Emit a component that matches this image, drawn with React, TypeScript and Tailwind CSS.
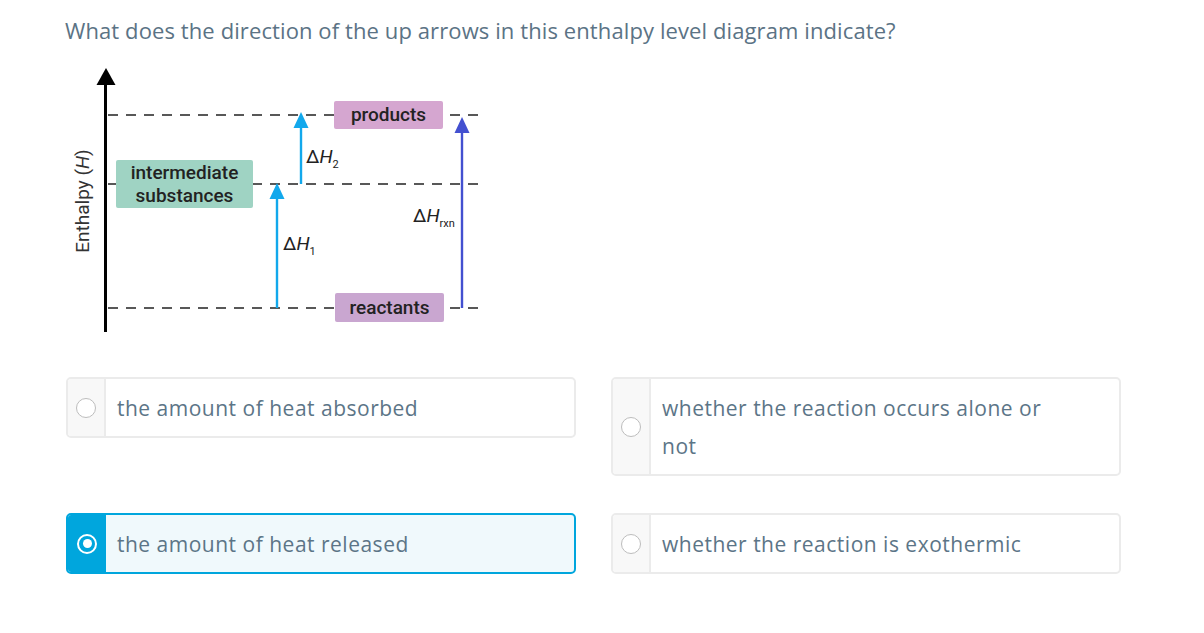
import React from "react";

function Delta({ x, y, sub }: { x: number; y: number; sub: string }) {
  return (
    <text x={x} y={y} fontFamily="Roboto, sans-serif" fontSize="19" fill="#222">
      Δ<tspan fontStyle="italic">H</tspan>
      <tspan fontSize="11" dy="5">
        {sub}
      </tspan>
    </text>
  );
}

function Diagram() {
  return (
    <svg width="430" height="290" viewBox="60 60 430 290" className="block">
      {/* level lines */}
      <g stroke="#222" strokeWidth="1.4" strokeDasharray="10 8">
        <line x1="108" y1="115" x2="478" y2="115" />
        <line x1="108" y1="184" x2="478" y2="184" />
        <line x1="108" y1="308" x2="478" y2="308" />
      </g>

      {/* enthalpy axis */}
      <line x1="105.5" y1="82" x2="105.5" y2="332" stroke="#000" strokeWidth="3" />
      <polygon points="96.5,85 115.5,85 106,68" fill="#000" />
      <text
        transform="translate(89 201) rotate(-90)"
        textAnchor="middle"
        fontFamily="Roboto, sans-serif"
        fontSize="19"
        fill="#333"
      >
        Enthalpy (<tspan fontStyle="italic">H</tspan>)
      </text>

      {/* boxes */}
      <g fontFamily="Roboto, sans-serif" fontSize="19" fontWeight="500" fill="#222" textAnchor="middle">
        <rect x="116" y="160" width="137" height="48" rx="2" fill="#9fd3c3" />
        <text x="184.5" y="179">intermediate</text>
        <text x="184.5" y="202">substances</text>
        <rect x="334" y="101" width="109" height="28" rx="2" fill="#d5a6d0" />
        <text x="388.5" y="121">products</text>
        <rect x="335" y="293" width="109" height="29" rx="2" fill="#c9a6d0" />
        <text x="389.5" y="314">reactants</text>
      </g>

      {/* ΔH1 */}
      <line x1="277" y1="308" x2="277" y2="196" stroke="#12a8ec" strokeWidth="2.4" />
      <polygon points="269.5,199 284.5,199 277,183" fill="#12a8ec" />
      {/* ΔH2 */}
      <line x1="301" y1="184" x2="301" y2="125" stroke="#12a8ec" strokeWidth="2.4" />
      <polygon points="293.5,128 308.5,128 301,112" fill="#12a8ec" />
      {/* ΔHrxn */}
      <line x1="462" y1="308" x2="462" y2="130" stroke="#4350d0" strokeWidth="2.4" />
      <polygon points="454.5,133 469.5,133 462,117" fill="#4350d0" />

      <Delta x={306} y={163} sub="2" />
      <Delta x={283} y={250} sub="1" />
      <Delta x={413} y={222} sub="rxn" />
    </svg>
  );
}

function Radio({ checked }: { checked: boolean }) {
  if (checked) {
    return (
      <span className="flex h-[20px] w-[20px] items-center justify-center rounded-full border-2 border-white">
        <span className="h-[9px] w-[9px] rounded-full bg-white" />
      </span>
    );
  }
  return <span className="h-[20px] w-[20px] rounded-full border border-[#bdbdbd] bg-white" />;
}

function Choice({ text, checked = false }: { text: string; checked?: boolean }) {
  return (
    <div
      className={`flex overflow-hidden rounded-[5px] border-2 ${
        checked ? "border-[#00a6dd] bg-[#f0f9fc]" : "border-[#ebebeb] bg-white"
      }`}
    >
      <div
        className={`flex w-[38px] shrink-0 items-center justify-center ${
          checked ? "bg-[#00a6dd]" : "border-r-2 border-[#ebebeb] bg-[#f8f8f8]"
        }`}
      >
        <Radio checked={checked} />
      </div>
      <div className="flex-1 py-[9.5px] pl-[11px] pr-[50px] font-['Open_Sans',sans-serif] text-[21px] leading-[38px] tracking-[0.5px] text-[#5c7587]">
        {text}
      </div>
    </div>
  );
}

export default function App() {
  return (
    <div className="min-h-[633px] w-[1204px] bg-white">
      <h1 className="pl-[65px] pt-[15px] font-['Open_Sans',sans-serif] text-[22px] leading-[30px] tracking-[0.1px] text-[#5b7385]">
        What does the direction of the up arrows in this enthalpy level diagram indicate?
      </h1>

      <div className="ml-[60px] mt-[15px]">
        <Diagram />
      </div>

      <div className="ml-[66px] mt-[27px] grid w-[1055px] grid-cols-2 items-start gap-x-[35px] gap-y-[37px]">
        <Choice text="the amount of heat absorbed" />
        <Choice text="whether the reaction occurs alone or not" />
        <Choice text="the amount of heat released" checked />
        <Choice text="whether the reaction is exothermic" />
      </div>
    </div>
  );
}
